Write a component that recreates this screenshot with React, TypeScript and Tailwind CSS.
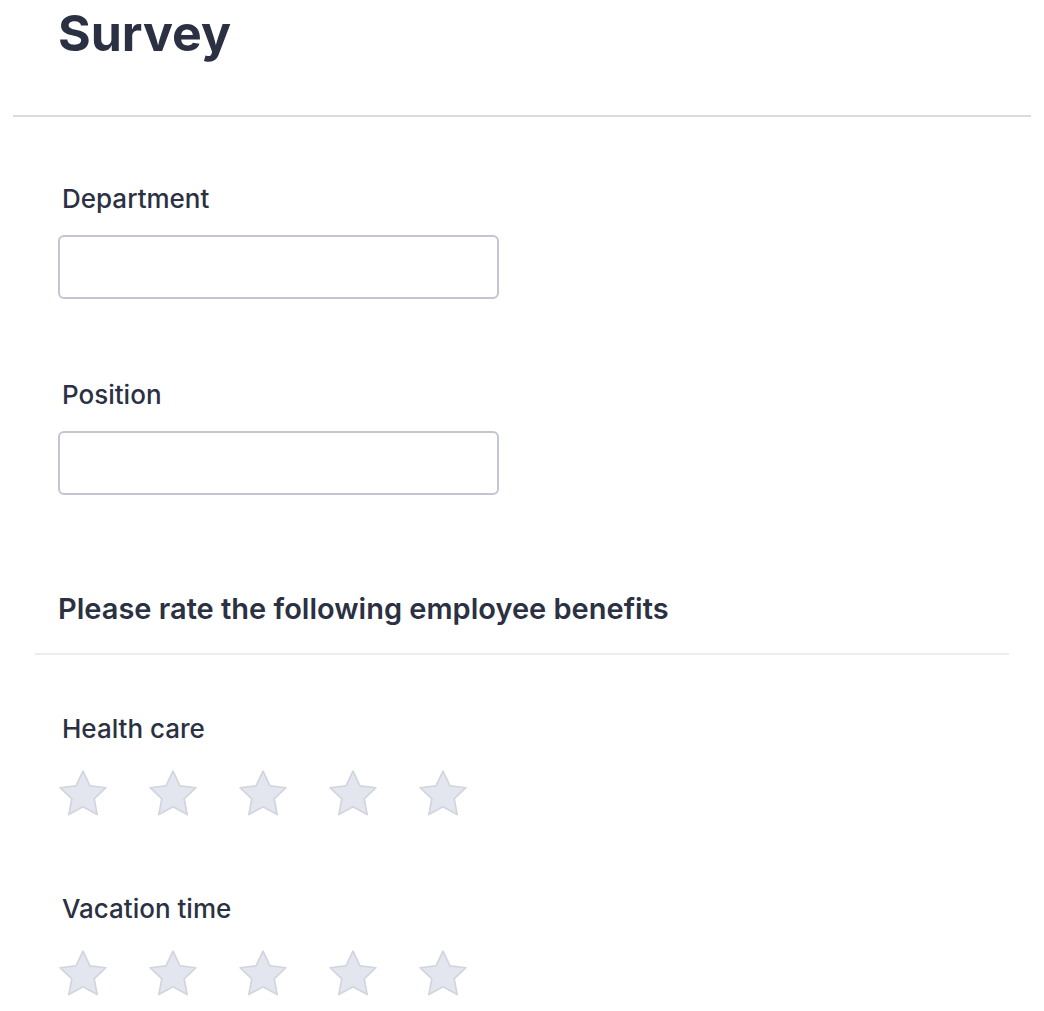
import React from 'react';

const Star = () => (
    <svg width="48" height="46" viewBox="2.2 2.2 19.6 18.6" className="block">
        <path
            d="M12 2.6l2.85 5.95 6.5.8-4.8 4.5 1.25 6.45L12 17.1l-5.8 3.2 1.25-6.45-4.8-4.5 6.5-.8z"
            fill="#e4e6ef"
            stroke="#d2d5de"
            strokeWidth="0.7"
            strokeLinejoin="round"
        />
    </svg>
);

const Rating = ({ label }: { label: string }) => (
    <div className="pl-[62px]">
        <div className="text-[26px] leading-[32px] font-medium text-[#2b3142]">{label}</div>
        <div className="flex gap-[42px] mt-[25px] -ml-[3px]">
            {[0, 1, 2, 3, 4].map((i) => (
                <Star key={i} />
            ))}
        </div>
    </div>
);

const Field = ({ label }: { label: string }) => (
    <div>
        <div className="pl-[62px] text-[26px] leading-[32px] font-medium text-[#2b3142]">{label}</div>
        <input className="ml-[58px] mt-[20px] block w-[441px] h-[64px] rounded-[6px] border-2 border-[#c3c6d2] bg-white" />
    </div>
);

export default function App() {
    return (
        <div className="min-h-screen bg-white font-['Inter',sans-serif] text-[#2b3142]">
            <h1 className="pl-[58px] pt-[2px] text-[50px] leading-[62px] font-bold text-[#2b3142]">Survey</h1>
            <div className="mx-[13px] mt-[51px] h-[2px] bg-[#d9dbe3]" />

            <div className="mt-[66px] flex flex-col gap-[80px]">
                <Field label="Department" />
                <Field label="Position" />
            </div>

            <h2 className="mt-[96px] pl-[58px] text-[29px] leading-[36px] font-semibold text-[#2b3142]">
                Please rate the following employee benefits
            </h2>
            <div className="mx-[35px] mt-[26px] h-[2px] bg-[#ebecf4]" />

            <div className="mt-[58px] flex flex-col gap-[77px]">
                <Rating label="Health care" />
                <Rating label="Vacation time" />
            </div>
        </div>
    );
}
